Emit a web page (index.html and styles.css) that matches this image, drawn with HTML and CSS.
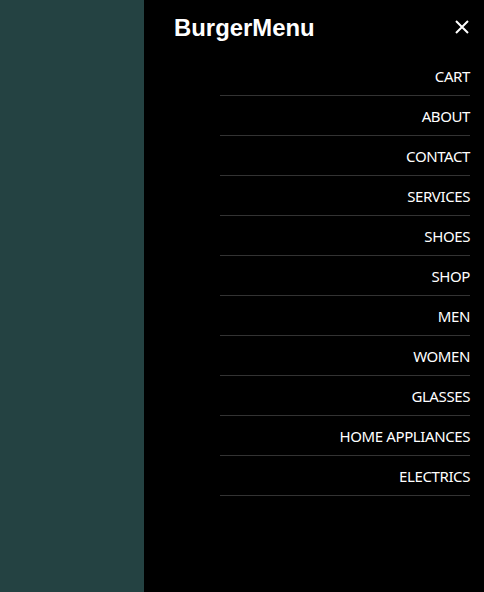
FILE: index.html
```html
<!DOCTYPE html>
<html lang="en">
<head>
<meta charset="utf-8">
<title>BurgerMenu</title>
<link rel="stylesheet" href="styles.css">
</head>
<body>
<div class="page">
  <div class="backdrop"></div>
  <aside class="sidebar">
    <header class="sidebar-header">
      <h1 class="brand">BurgerMenu</h1>
      <button class="close" aria-label="Close">
        <svg width="14" height="14" viewBox="0 0 14 14"><path d="M1 1L13 13M13 1L1 13" stroke="#fff" stroke-width="2" fill="none"/></svg>
      </button>
    </header>
    <ul class="menu">
      <li>CART</li>
      <li>ABOUT</li>
      <li>CONTACT</li>
      <li>SERVICES</li>
      <li>SHOES</li>
      <li>SHOP</li>
      <li>MEN</li>
      <li>WOMEN</li>
      <li>GLASSES</li>
      <li>HOME APPLIANCES</li>
      <li>ELECTRICS</li>
    </ul>
  </aside>
</div>
</body>
</html>
```

FILE: styles.css
```css
html, body {
  margin: 0;
  padding: 0;
  height: 100%;
}
body {
  background: #244242;
  font-family: "Noto Sans", "Open Sans", sans-serif;
}
.page {
  display: flex;
  height: 100%;
}
.backdrop {
  width: 144px;
  flex: none;
  background: #244242;
}
.sidebar {
  flex: 1;
  background: #000;
  color: #fff;
  padding: 15px 14px 0 30px;
  box-sizing: border-box;
}
.sidebar-header {
  display: flex;
  justify-content: space-between;
  align-items: flex-start;
  height: 41px;
}
.brand {
  margin: 0;
  font-family: "Liberation Sans", Arial, sans-serif;
  font-weight: bold;
  font-size: 23.9px;
  line-height: 25px;
}
.close {
  background: none;
  border: 0;
  padding: 0;
  margin-top: 5px;
  margin-right: 1px;
  width: 14px;
  height: 14px;
  display: block;
}
.close svg {
  display: block;
}
.menu {
  list-style: none;
  margin: 0 0 0 46px;
  padding: 0;
}
.menu li {
  text-align: right;
  font-size: 15px;
  letter-spacing: -0.4px;
  line-height: 20px;
  padding: 10px 0 9px;
  border-bottom: 1px solid #333;
}
```
